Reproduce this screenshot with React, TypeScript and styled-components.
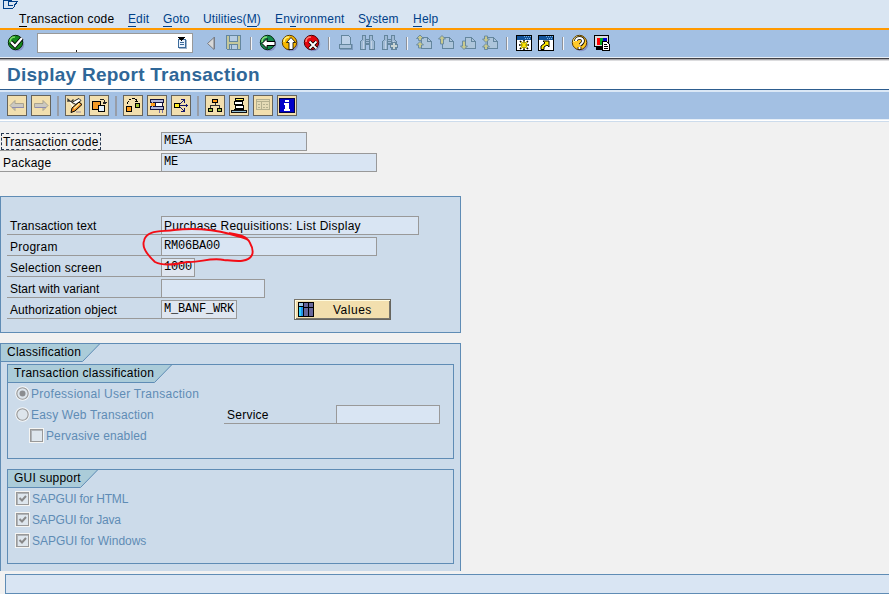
import React from "react";
import styled, { createGlobalStyle, css } from "styled-components";

const Global = createGlobalStyle`
  * { box-sizing: border-box; }
  html, body { margin: 0; padding: 0; overflow: hidden; }
  body { background: #f1f1f1; font-family: "Liberation Sans", Arial, sans-serif; font-size: 12px; color: #000; }
`;

const line = "#5f8cb5";

const Window = styled.div`
  width: 889px;
  height: 594px;
  background: #f1f1f1;
  display: flex;
  flex-direction: column;
  overflow: hidden;
`;

const MenuArea = styled.header`
  height: 30px;
  flex: none;
  background: #d9e5f2;
  border-bottom: 2px solid #ff9900;
`;
const SystemRow = styled.div`
  height: 11px;
  padding-left: 2px;
  svg { display: block; }
`;
const Menu = styled.nav`
  display: flex;
  padding-left: 19px;
  height: 17px;
`;
const MenuItem = styled.span<{ $w: number; $ls: number; $active?: boolean }>`
  flex: none;
  width: ${(p) => p.$w}px;
  line-height: 16px;
  white-space: nowrap;
  letter-spacing: ${(p) => p.$ls}px;
  color: ${(p) => (p.$active ? "#000" : "#003f88")};
`;
const Key = styled.span`
  display: inline-block;
  height: 16px;
  border-bottom: 1px solid currentColor;
  vertical-align: top;
`;

const StandardBar = styled.div`
  height: 28px;
  flex: none;
  background: #a3c0e3;
  border-bottom: 1px solid #e8eef6;
  display: flex;
  padding: 2px 0 0 5px;
`;
const IconCell = styled.span`
  width: 22px;
  height: 22px;
  flex: none;
  svg { display: block; }
`;
const Command = styled.div`
  flex: none;
  width: 156px;
  height: 20px;
  margin: 1px 7px 0 10px;
  background: #fff;
  border: 1px solid #999;
  display: flex;
  justify-content: space-between;
  padding: 3px 5px 0 38px;
`;
const Caret = styled.i`
  width: 1px;
  height: 2px;
  margin-top: 13px;
  background: #222;
`;
const Sep = styled.span<{ $w: number; $h: number; $top: number; $flat?: boolean }>`
  flex: none;
  width: ${(p) => p.$w}px;
  display: flex;
  justify-content: center;
  &::before {
    content: "";
    width: 2px;
    height: ${(p) => p.$h}px;
    margin-top: ${(p) => p.$top}px;
    background: ${(p) => (p.$flat ? "#979da8" : "linear-gradient(90deg, #8e929a 50%, #f2f4f8 50%)")};
  }
`;

const TitleBar = styled.div`
  height: 32px;
  flex: none;
  border-top: 1px solid #404046;
  border-bottom: 1px solid #2d5d8f;
  background: linear-gradient(#a9a9ad 0 1px, #dcdcde 1px 2px, #fff 2px);
`;
const Title = styled.h1`
  margin: 0;
  padding: 5px 0 0 7px;
  font-size: 19px;
  line-height: 21px;
  font-weight: bold;
  letter-spacing: 0.26px;
  color: #2f6798;
  white-space: nowrap;
`;
const AppBar = styled.div`
  height: 32px;
  flex: none;
  border-top: 2px solid #dbe8f6;
  background: linear-gradient(#a3c0e3 0 27px, #e6eef7 27px 28px, #fff 28px 29px, #cddcec 29px 30px);
  display: flex;
  padding: 3px 0 0 7px;
`;
const AppButton = styled.button`
  flex: none;
  width: 20px;
  height: 21px;
  padding: 0;
  border: 1px solid #66635a;
  background: #f2dfae;
  & + & { margin-left: 4px; }
  svg { display: block; }
`;

const Body = styled.main`
  flex: 1;
  min-height: 0;
  padding-top: 10px;
`;
const Row = styled.div<{ $indent?: number; $labelW: number }>`
  display: grid;
  flex: none;
  grid-template-columns: ${(p) => p.$labelW}px auto 1fr;
  margin-left: ${(p) => p.$indent || 0}px;
  height: 19px;
  & + & { margin-top: 2px; }
`;
const Label = styled.label<{ $ls?: number }>`
  height: 19px;
  border-bottom: 1px solid #999;
  padding-left: 3px;
  line-height: 20px;
  white-space: nowrap;
  letter-spacing: ${(p) => p.$ls ?? 0.25}px;
`;
const Focused = styled.span`
  display: block;
  width: 100px;
  height: 17px;
  margin: 1px 0 0 -2px;
  padding-left: 1px;
  line-height: 16px;
  border: 1px dashed #26374f;
`;
const Field = styled.div<{ $w: number; $prop?: boolean; $light?: boolean }>`
  width: ${(p) => p.$w}px;
  height: 19px;
  border: 1px solid #999;
  background: ${(p) => (p.$light ? "#dfe6f0" : "#d9e5f3")};
  padding-left: 2px;
  white-space: nowrap;
  ${(p) =>
    p.$prop
      ? css`line-height: 18px; letter-spacing: 0.27px;`
      : css`font-family: "Liberation Mono", monospace; line-height: 17px; letter-spacing: -0.2px;`}
`;

const Panel = styled.section<{ $h: number; $top: number; $pad?: number; $open?: boolean }>`
  position: relative;
  width: 461px;
  height: ${(p) => p.$h}px;
  margin-top: ${(p) => p.$top}px;
  padding-top: ${(p) => p.$pad || 0}px;
  border: 1px solid ${line};
  ${(p) => p.$open && css`border-bottom: 0;`}
  background: #ccdbea;
`;
const SubPanel = styled.section<{ $top: number }>`
  width: 447px;
  height: 95px;
  margin: ${(p) => p.$top}px 0 0 6px;
  border: 1px solid ${line};
`;
const TabHead = styled.div<{ $w: number }>`
  display: grid;
  width: ${(p) => p.$w}px;
  height: 18px;
  > * { grid-area: 1 / 1; }
  svg { display: block; }
`;
const TabText = styled.span<{ $ls: number }>`
  padding-left: 6px;
  line-height: 16px;
  white-space: nowrap;
  letter-spacing: ${(p) => p.$ls}px;
`;
const ValuesButton = styled.button`
  justify-self: start;
  margin: -1px 0 0 57px;
  width: 97px;
  height: 21px;
  padding: 0 0 0 3px;
  display: flex;
  align-items: center;
  font: inherit;
  color: #000;
  letter-spacing: 0.5px;
  background: #f2dfae;
  border: 1px solid;
  border-color: #77746a #66655f #66655f #77746a;
  box-shadow: inset 1px 1px #fffbe0, inset -1px -1px #77756c;
  svg { flex: none; margin-right: 19px; }
`;
const Options = styled.div`
  display: flex;
  flex-direction: column;
  padding: 2px 0 0 7px;
`;
const OptionLine = styled.div<{ $indent?: number }>`
  height: 21px;
  display: flex;
  padding-left: ${(p) => p.$indent || 0}px;
  svg { flex: none; margin-top: 1px; }
`;
const OptionText = styled.span<{ $ls: number; $w?: number; $gap?: number }>`
  flex: none;
  width: ${(p) => (p.$w ? p.$w + "px" : "auto")};
  margin-left: ${(p) => p.$gap ?? 1}px;
  line-height: 18px;
  white-space: nowrap;
  letter-spacing: ${(p) => p.$ls}px;
  color: #5f8cb5;
`;
const ServiceRow = styled(Row)`
  margin-top: -1px;
`;
const StatusBar = styled.footer`
  flex: none;
  height: 20px;
  margin-left: 5px;
  background: #d9e5f3;
  border: 1px solid ${line};
  border-right: 0;
`;
const Scribble = styled.svg`
  position: absolute;
  left: 137px;
  top: 28px;
  pointer-events: none;
`;

const Tab = ({ w, text, ls }: { w: number; text: string; ls: number }) => (
  <TabHead $w={w}>
    <svg width={w} height="18">
      <path d={`M0 0H${w}L${w - 17.5} 17.5H0Z`} fill="#abccd9" />
      <path d={`M${w} -.5L${w - 17.5} 17.5H0`} fill="none" stroke={line} />
    </svg>
    <TabText $ls={ls}>{text}</TabText>
  </TabHead>
);

type P = { children: React.ReactNode; w?: number; h?: number };
const Art = ({ children, w = 22, h = 22 }: P) => (
  <svg width={w} height={h} viewBox={`0 0 ${w} ${h}`} shapeRendering="crispEdges" fill="none">
    {children}
  </svg>
);
const Cell = ({ children }: P) => <IconCell><Art>{children}</Art></IconCell>;

const Ball = ({ c, hi, dark }: { c: string; hi: string; dark: string }) => (
  <g shapeRendering="auto">
    <circle cx="12" cy="12" r="7.3" fill="#8794c8" />
    <circle cx="10.5" cy="10.5" r="7.2" fill={c} stroke={dark} />
    <path d="M5 10Q5 5 10 5" stroke={hi} strokeWidth="1.6" />
  </g>
);
const ghost = "#64869e";
const sand = "#c9c98c";

const Page = ({ x }: { x: number }) => (
  <g>
    <path d={`M${x}.5 5.500H14.500L18.500 9.500V16.500H${x}.5z`} fill="#adc5db" stroke={ghost} />
    <path d="M14.500 5.500V9.500H18.500" stroke={ghost} />
  </g>
);
const Up = ({ x, y, s = 0 }: { x: number; y: number; s?: number }) => (
  <path d={`M${x} ${y}l3.500 3.500h-2v${2 + s}h-3v-${2 + s}h-2z`} fill={sand} stroke={ghost} strokeWidth=".9" shapeRendering="auto" />
);
const Down = ({ x, y, s = 0 }: { x: number; y: number; s?: number }) => (
  <path d={`M${x} ${y}l3.500 -3.500h-2v-${2 + s}h-3v${2 + s}h-2z`} fill={sand} stroke={ghost} strokeWidth=".9" shapeRendering="auto" />
);
const Binoculars = () => (
  <g>
    <path d="M5.500 3.500h3v4h4v-4h3v4l2 2v8h-5v-5h-4v5h-5v-8l2-2z" fill="#9fb9d4" stroke={ghost} />
    <path d="M6.500 9v8M14.500 9v8" stroke="#c2d3e5" />
    <path d="M8 9.500h5M8 11.500h5M8.500 5v7M12.500 5v7" stroke={ghost} />
  </g>
);
const WindowFrame = () => (
  <g>
    <path d="M3.500 3.500h15v15h-15z" fill="#fff" stroke="#000" />
    <path d="M4 4h14v4H4z" fill="#14549a" />
    <path d="M11 4.500h7M12 6.500h6" stroke="#7eb5e4" strokeDasharray="1 1" />
  </g>
);

const Standard = () => (
  <StandardBar>
    <Cell>
      <Ball c="#168a1d" hi="#7cdb63" dark="#052c06" />
      <path d="M6 10l4 4 7-8" stroke="#000" strokeWidth="4" shapeRendering="auto" />
      <path d="M6 10l4 4 7-8" stroke="#fff" strokeWidth="2.300" shapeRendering="auto" />
    </Cell>
    <Command>
      <Caret />
      <Art w={10} h={12}>
        <path d="M1.500 2.500h7v8h-7z" fill="#eaf3ff" stroke="#3c6b9b" />
        <path d="M9.500 3v8.500H2" stroke="#9fb3cb" />
        <path d="M1 0h7v1H7v1H6v1H5v1H4V3H3V2H2V1H1z" fill="#000" />
        <path d="M3 5.500h4M3 7.500h4" stroke="#3c6b9b" />
      </Art>
    </Command>
    <Cell>
      <path d="M14 5.500v12l-6.500-6z" fill="#d8d8d8" stroke="#777c86" shapeRendering="auto" />
      <path d="M14.500 5v12" stroke="#777c86" />
    </Cell>
    <Cell>
      <path d="M4.500 3.500h14v14h-13l-1-1z" fill="#c3c79a" stroke={ghost} />
      <path d="M7.500 3.500h8v6h-8zM7.500 12.500h8v5h-8z" fill="#b5cce4" stroke={ghost} />
      <path d="M9.500 13v4" stroke={ghost} />
    </Cell>
    <Sep $w={13} $h={13} $top={5} />
    <Cell>
      <Ball c="#148a4c" hi="#8be07a" dark="#042a10" />
      <path d="M5 11.500l5-5v3h8v4h-8v3z" fill="#fff" stroke="#000" shapeRendering="auto" />
    </Cell>
    <Cell>
      <Ball c="#f8b800" hi="#fff27c" dark="#5c3b00" />
      <path d="M12 5.500l4.500 5h-2.500v7h-4v-7h-2.500z" fill="#fff" stroke="#000" strokeWidth=".8" shapeRendering="auto" />
    </Cell>
    <Cell>
      <Ball c="#e4060e" hi="#ff7a6c" dark="#4c0000" />
      <path d="M8.500 9.500l7 7M15.500 9.500l-7 7" stroke="#000" strokeWidth="3.500" shapeRendering="auto" />
      <path d="M8.500 9.500l7 7M15.500 9.500l-7 7" stroke="#fff" strokeWidth="1.800" shapeRendering="auto" />
    </Cell>
    <Sep $w={12} $h={13} $top={5} />
    <Cell>
      <path d="M6.500 13V3.500h7l2 2V13" fill="#bdd1e8" stroke={ghost} />
      <path d="M4.500 12.500h12v4h-12z" fill="#a9c1da" stroke={ghost} />
      <path d="M5 17.500h12.500V12" stroke="#7f9cc0" />
    </Cell>
    <Cell><Binoculars /></Cell>
    <Cell>
      <Binoculars />
      <path d="M13.500 10.500h3v2h2v3h-2v2h-3v-2h-2v-3h2z" fill="#c9d5d4" stroke={ghost} />
    </Cell>
    <Sep $w={12} $h={13} $top={5} />
    <Cell><Page x={8} /><Up x={7} y={3} /><Up x={7} y={9.500} s={1} /></Cell>
    <Cell><Page x={7} /><Up x={7} y={3.500} s={3} /></Cell>
    <Cell><Page x={8} /><Down x={7} y={17.500} s={3} /></Cell>
    <Cell><Page x={8} /><Down x={7} y={10.500} s={1} /><Up x={7} y={11.500} s={.5} /></Cell>
    <Sep $w={12} $h={13} $top={5} />
    <Cell>
      <WindowFrame />
      <path d="M11 8v10M6 13h10M7 9l8 8M15 9l-8 8" stroke="#000" strokeWidth="1.600" shapeRendering="auto" />
      <path d="M11 9v8M7 13h8M8 10l6 6M14 10l-6 6" stroke="#ffe800" strokeWidth="1.100" shapeRendering="auto" />
    </Cell>
    <Cell>
      <WindowFrame />
      <path d="M6 17.500V14l4-3-2-2h6v6l-2-2-3 2v2.500z" fill="#ffe800" stroke="#000" shapeRendering="auto" />
    </Cell>
    <Sep $w={12} $h={13} $top={5} />
    <Cell>
      <Ball c="#ffc928" hi="#fff6a0" dark="#5c3b00" />
      <path d="M7 9q0-3 3.500-3t3.500 3q0 2-3 4M10.500 15v2.500" stroke="#000" strokeWidth="3.600" shapeRendering="auto" />
      <path d="M7 9q0-3 3.500-3t3.500 3q0 2-3 4M10.500 15v2" stroke="#fff" strokeWidth="2.100" shapeRendering="auto" />
    </Cell>
    <Cell>
      <path d="M3.500 3.500h14v11h-14z" fill="#ddd" stroke="#000" />
      <path d="M6 6h3v7H6z" fill="#f00" /><path d="M9 6h3v7H9z" fill="#0a2" /><path d="M12 6h4v7h-4z" fill="#00c" />
      <path d="M5 16.500h8" stroke="#000" strokeWidth="3" />
      <path d="M11.500 9.500h4l3 3v6h-7z" fill="#fff" stroke="#000" />
      <path d="M13 12.500h3M13 14.500h4M13 16.500h4" stroke="#000" />
    </Cell>
  </StandardBar>
);

const Btn = ({ children }: P) => <AppButton><Art w={18} h={19}>{children}</Art></AppButton>;
const Shortcuts = () => (
  <AppBar>
    <Btn><path d="M2 9.500l5-5v3h8.500v4H7v3z" fill="#cbc8c1" stroke="#aaa38f" shapeRendering="auto" /><path d="M4 11.500h11.500" stroke="#8f8cae" /></Btn>
    <Btn><path d="M16 9.500l-5-5v3H2.500v4H11v3z" fill="#cbc8c1" stroke="#aaa38f" shapeRendering="auto" /><path d="M2.500 11.500H14" stroke="#8f8cae" /></Btn>
    <Sep $flat $w={14} $h={20} $top={1} />
    <Btn>
      <g shapeRendering="auto">
        <path d="M2 6V3.500L5 6l2.500-2.500" stroke="#333" strokeWidth="1.300" />
        <path d="M6 6.500l4-2.500 3-1.500 2 2-5 4z" fill="#fff" stroke="#222" />
        <path d="M4 6l5 7" stroke="#fff" strokeWidth="1.200" />
        <path d="M6 12l7-6 3 2.500-7 6.500-4 1.500z" fill="#f09028" stroke="#000" />
        <path d="M8 12.500l5.500-5" stroke="#fff1a5" strokeWidth="1.200" />
        <path d="M10 16h5" stroke="#9a8da0" />
      </g>
    </Btn>
    <Btn>
      <path d="M2.500 5.500h8v8h-8z" fill="#f59a24" stroke="#000" />
      <path d="M8.500 9.500h6v6h-6z" fill="#e2f0fc" stroke="#000" />
      <path d="M10 3.500h4M14.500 4v4M12.500 6.500h1v1h2v-1h1" stroke="#222" />
    </Btn>
    <Sep $flat $w={14} $h={20} $top={1} />
    <Btn>
      <path d="M2.500 10.500h5v5h-5z" fill="#ff9b18" stroke="#000" />
      <path d="M11.500 7.500h4v4h-4z" fill="#a2c534" stroke="#000" />
      <path d="M3.500 8V6M4.500 6V4.500M5 3.500h2M8 2.500h3M11 3.500h1.500V5M10.500 5.500h3" stroke="#000" />
    </Btn>
    <Btn>
      <path d="M2.500 3.500h13v3H5.500v4h10v3h-13v-3h1v-4h-1z" fill="#b5b9dc" stroke="#12123f" />
      <path d="M7.500 6.500h7v4h-7z" fill="#fff" stroke="#12123f" />
      <path d="M3 7h4v3H3z" fill="#ff9b18" />
      <path d="M11 14h1v3h-1zM14 14h1v3h-1z" fill="#776f9b" />
    </Btn>
    <Btn>
      <path d="M2.500 7.500h5v4h-5z" fill="#ffee20" stroke="#000" />
      <path d="M8 9.500h8M14.500 8v3M8 8l4-4M8 11l4 4M9 3.500h3.500V7M9 15.500h3.500V12" stroke="#17176c" />
    </Btn>
    <Sep $flat $w={14} $h={20} $top={1} />
    <Btn>
      <path d="M6.500 3.500h5v3h-5z" fill="#ff9b18" stroke="#000" />
      <path d="M9 7v2.500M4.500 12V9.500h9V12" stroke="#333" />
      <path d="M2.500 12.500h4v3h-4zM11.500 12.500h4v3h-4z" fill="#9ac043" stroke="#000" />
    </Btn>
    <Btn>
      <path d="M5.500 2.500h8v2h-8z" fill="#ffee50" stroke="#000" />
      <path d="M4.500 5.500h8v3h-8z" fill="#fff" stroke="#000" />
      <path d="M5.500 9.500h8v3h-8z" fill="#fff" stroke="#000" />
      <path d="M1.500 14.500h15v2h-15z" fill="#91bdd4" stroke="#111" />
      <path d="M4 13.500h10" stroke="#000" />
    </Btn>
    <Btn>
      <path d="M2.500 3.500h13v10h-13z" fill="#e4dbb6" stroke="#b4b08f" />
      <path d="M3 5.500h12M7.500 6v8M4 8.500h2M4 11.500h2M9 8.500h2M12 8.500h2M9 11.500h2M12 11.500h2" stroke="#b4b08f" />
    </Btn>
    <Btn>
      <path d="M1.500 2.500h15v14h-15z" fill="#0000c8" stroke="#00004a" />
      <path d="M7 4h4v2H7zM6 7h5v6h1v2H6v-2h1V9H6z" fill="#fff" />
    </Btn>
  </AppBar>
);

const Radio = ({ on }: { on?: boolean }) => (
  <svg width="15" height="15">
    <circle cx="7.500" cy="7.500" r="6.500" fill="#dde5ec" stroke="#f6f8fa" strokeWidth="1.500" />
    <circle cx="7.500" cy="7.500" r="5.700" fill="none" stroke="#969696" strokeWidth="1.100" />
    {on && <circle cx="7.500" cy="7.500" r="3" fill="#8b8d90" />}
  </svg>
);
const Check = ({ on }: { on?: boolean }) => (
  <Art w={15} h={15}>
    <path d="M.5.5h14v14H.5z" fill="#dee6ed" stroke="#f5f5f3" />
    <path d="M1.500 1.500h12v12h-12z" stroke="#999" />
    <path d="M2.500 13V2.500H13" stroke="#b0b4b8" />
    {on && <path d="M4.500 7l2.500 2.500 4-4.500" stroke="#888" strokeWidth="2" shapeRendering="auto" />}
  </Art>
);

export default function App() {
  return (
    <Window>
      <Global />
      <MenuArea>
        <SystemRow>
          <Art w={17} h={10}>
            <path d="M2 .5H1.500v8h9l1-1 1-1V5.500" stroke="#003f88" />
            <path d="M11 5.500H6.500v-4h9M15 2.500l-3 3" stroke="#003f88" />
            <path d="M1 .5h9" stroke="#003f88" />
          </Art>
        </SystemRow>
        <Menu>
          <MenuItem $w={109} $ls={0.2} $active><Key>T</Key>ransaction code</MenuItem>
          <MenuItem $w={35} $ls={0.1}><Key>E</Key>dit</MenuItem>
          <MenuItem $w={40} $ls={0.1}><Key>G</Key>oto</MenuItem>
          <MenuItem $w={72} $ls={0.1}>Utilities(<Key>M</Key>)</MenuItem>
          <MenuItem $w={83} $ls={0.2}>En<Key>v</Key>ironment</MenuItem>
          <MenuItem $w={55} $ls={0.1}>S<Key>y</Key>stem</MenuItem>
          <MenuItem $w={40} $ls={0.2}><Key>H</Key>elp</MenuItem>
        </Menu>
      </MenuArea>
      <Standard />
      <TitleBar><Title>Display Report Transaction</Title></TitleBar>
      <Shortcuts />
      <Body>
        <Row $labelW={161}>
          <Label><Focused>Transaction code</Focused></Label>
          <Field $w={146}>ME5A</Field>
        </Row>
        <Row $labelW={161}>
          <Label>Package</Label>
          <Field $w={216}>ME</Field>
        </Row>
        <Panel $h={137} $top={24} $pad={19}>
          <Row $indent={6} $labelW={154}>
            <Label $ls={0.1}>Transaction text</Label>
            <Field $w={258} $prop>Purchase Requisitions: List Display</Field>
          </Row>
          <Row $indent={6} $labelW={154}>
            <Label>Program</Label>
            <Field $w={216}>RM06BA00</Field>
          </Row>
          <Row $indent={6} $labelW={154}>
            <Label $ls={0.2}>Selection screen</Label>
            <Field $w={34} $light>1000</Field>
          </Row>
          <Row $indent={6} $labelW={154}>
            <Label $ls={0}>Start with variant</Label>
            <Field $w={104} />
          </Row>
          <Row $indent={6} $labelW={154}>
            <Label $ls={0.08}>Authorization object</Label>
            <Field $w={76} $light>M_BANF_WRK</Field>
            <ValuesButton>
              <Art w={16} h={15}>
                <path d="M0 0h16v15H0z" fill="#000" />
                <path d="M1 1h4v3H1z" fill="#9cc6e8" /><path d="M1 5h4v9H1z" fill="#2491e8" /><path d="M1 5h2v9H1z" fill="#31d4ff" />
                <path d="M6 1h4v4H6zM11 1h4v4h-4zM6 6h4v8H6zM11 6h4v8h-4z" fill="#67679b" />
              </Art>
              Values
            </ValuesButton>
          </Row>
          <Scribble width="122" height="42">
            <path d="M91 8C101 10 109 11 112 18Q116 25 114 30C110 38 98 36 86 35C72 32 62 38 49 37C35 40 25 41 17 37Q3 24 6 16C8 4 25 7 36 5C55 3 77 5 92 9C102 12 108 13 110 15" fill="none" stroke="#f30d16" strokeWidth="1.900" />
          </Scribble>
        </Panel>
        <Panel $h={228} $top={10} $open>
          <Tab w={99} text="Classification" ls={0.25} />
          <SubPanel $top={2}>
            <Tab w={164} text="Transaction classification" ls={0.25} />
            <Options>
              <OptionLine><Radio on /><OptionText $ls={0.28}>Professional User Transaction</OptionText></OptionLine>
              <OptionLine>
                <Radio />
                <OptionText $ls={0.15} $w={193}>Easy Web Transaction</OptionText>
                <ServiceRow $labelW={112}>
                  <Label>Service</Label>
                  <Field $w={104} />
                </ServiceRow>
              </OptionLine>
              <OptionLine $indent={14}><Check /><OptionText $ls={0.12} $gap={2}>Pervasive enabled</OptionText></OptionLine>
            </Options>
          </SubPanel>
          <SubPanel $top={10}>
            <Tab w={90} text="GUI support" ls={0.2} />
            <Options>
              <OptionLine><Check on /><OptionText $ls={-0.17} $gap={2}>SAPGUI for HTML</OptionText></OptionLine>
              <OptionLine><Check on /><OptionText $ls={-0.17} $gap={2}>SAPGUI for Java</OptionText></OptionLine>
              <OptionLine><Check on /><OptionText $ls={-0.02} $gap={2}>SAPGUI for Windows</OptionText></OptionLine>
            </Options>
          </SubPanel>
        </Panel>
      </Body>
      <StatusBar />
    </Window>
  );
}
